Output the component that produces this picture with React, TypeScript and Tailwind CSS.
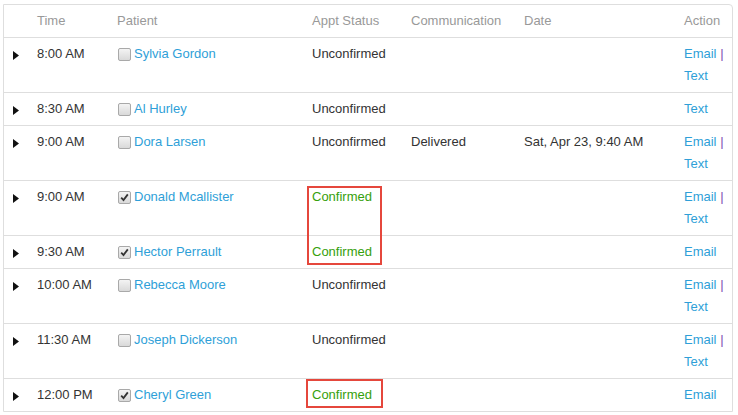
import { Fragment } from 'react';

type Action = 'both' | 'email' | 'text';

interface Appt {
  time: string;
  patient: string;
  checked: boolean;
  status: 'Confirmed' | 'Unconfirmed';
  communication?: string;
  date?: string;
  action: Action;
}

const appts: Appt[] = [
  { time: '8:00 AM', patient: 'Sylvia Gordon', checked: false, status: 'Unconfirmed', action: 'both' },
  { time: '8:30 AM', patient: 'Al Hurley', checked: false, status: 'Unconfirmed', action: 'text' },
  {
    time: '9:00 AM',
    patient: 'Dora Larsen',
    checked: false,
    status: 'Unconfirmed',
    communication: 'Delivered',
    date: 'Sat, Apr 23, 9:40 AM',
    action: 'both',
  },
  { time: '9:00 AM', patient: 'Donald Mcallister', checked: true, status: 'Confirmed', action: 'both' },
  { time: '9:30 AM', patient: 'Hector Perrault', checked: true, status: 'Confirmed', action: 'email' },
  { time: '10:00 AM', patient: 'Rebecca Moore', checked: false, status: 'Unconfirmed', action: 'both' },
  { time: '11:30 AM', patient: 'Joseph Dickerson', checked: false, status: 'Unconfirmed', action: 'both' },
  { time: '12:00 PM', patient: 'Cheryl Green', checked: true, status: 'Confirmed', action: 'email' },
];

function Checkbox({ checked }: { checked: boolean }) {
  return (
    <span className="inline-flex w-[13px] h-[13px] shrink-0 items-center justify-center rounded-[2px] border border-[#a9a9a9] bg-gradient-to-b from-[#f4f4f4] to-[#d9d9d9]">
      {checked && (
        <svg width="9" height="9" viewBox="0 0 9 9">
          <path d="M1.2 4.6 L3.5 7 L7.8 1.4" fill="none" stroke="#333" strokeWidth="1.8" />
        </svg>
      )}
    </span>
  );
}

function Caret() {
  return (
    <svg width="6" height="9" viewBox="0 0 6 9" className="block">
      <path d="M0 0 L6 4.5 L0 9 Z" fill="#111" />
    </svg>
  );
}

export default function App() {
  const th = 'text-left font-normal text-[#999] pt-[5px] pb-[5px] leading-[22px]';
  const td = 'align-top pt-[5px] pb-[5px] leading-[22px]';

  return (
    <div
      className="relative w-[738px] h-[415px] bg-white text-[13px] text-[#333]"
      style={{ fontFamily: '"Liberation Sans", Arial, sans-serif' }}
    >
      <div className="pt-[4px] pl-[3px]">
        <div className="w-[730px] border border-[#dedede] rounded-tr-[4px] overflow-hidden">
          <table className="w-full table-fixed border-collapse">
            <colgroup>
              <col className="w-[26px]" />
              <col className="w-[80px]" />
              <col className="w-[195px]" />
              <col className="w-[99px]" />
              <col className="w-[113px]" />
              <col className="w-[160px]" />
              <col />
            </colgroup>
            <thead>
              <tr className="border-b border-[#dedede]">
                <th className={th}></th>
                <th className={`${th} pl-[7px]`}>Time</th>
                <th className={`${th} pl-[7px]`}>Patient</th>
                <th className={`${th} pl-[7px]`}>Appt Status</th>
                <th className={`${th} pl-[7px]`}>Communication</th>
                <th className={`${th} pl-[7px]`}>Date</th>
                <th className={`${th} pl-[7px]`}>Action</th>
              </tr>
            </thead>
            <tbody>
              {appts.map((a, i) => (
                <tr key={i} className={i < appts.length - 1 ? 'border-b border-[#dedede]' : ''}>
                  <td className={`${td} pl-[9px]`}>
                    <div className="h-[22px] flex items-center pt-[2px]">
                      <Caret />
                    </div>
                  </td>
                  <td className={`${td} pl-[7px]`}>{a.time}</td>
                  <td className={`${td} pl-[8px]`}>
                    <div className="flex items-center gap-[3px] h-[22px]">
                      <Checkbox checked={a.checked} />
                      <span className="text-[#2f9fd8]">{a.patient}</span>
                    </div>
                  </td>
                  <td className={`${td} pl-[7px] ${a.status === 'Confirmed' ? 'text-[#36a00c]' : ''}`}>
                    {a.status}
                  </td>
                  <td className={`${td} pl-[7px]`}>{a.communication}</td>
                  <td className={`${td} pl-[7px]`}>{a.date}</td>
                  <td className={`${td} pl-[7px] text-[#2f9fd8]`}>
                    {a.action === 'both' && (
                      <Fragment>
                        <div>
                          Email <span className="text-[#7d4fb3]">|</span>
                        </div>
                        <div>Text</div>
                      </Fragment>
                    )}
                    {a.action === 'email' && <div>Email</div>}
                    {a.action === 'text' && <div>Text</div>}
                  </td>
                </tr>
              ))}
            </tbody>
          </table>
        </div>
      </div>

      {/* annotation boxes */}
      <div className="absolute left-[307px] top-[186px] w-[75px] h-[79px] border-2 border-[#e5473c]" />
      <div className="absolute left-[306px] top-[379px] w-[77px] h-[29px] border-2 border-[#e5473c]" />
    </div>
  );
}
